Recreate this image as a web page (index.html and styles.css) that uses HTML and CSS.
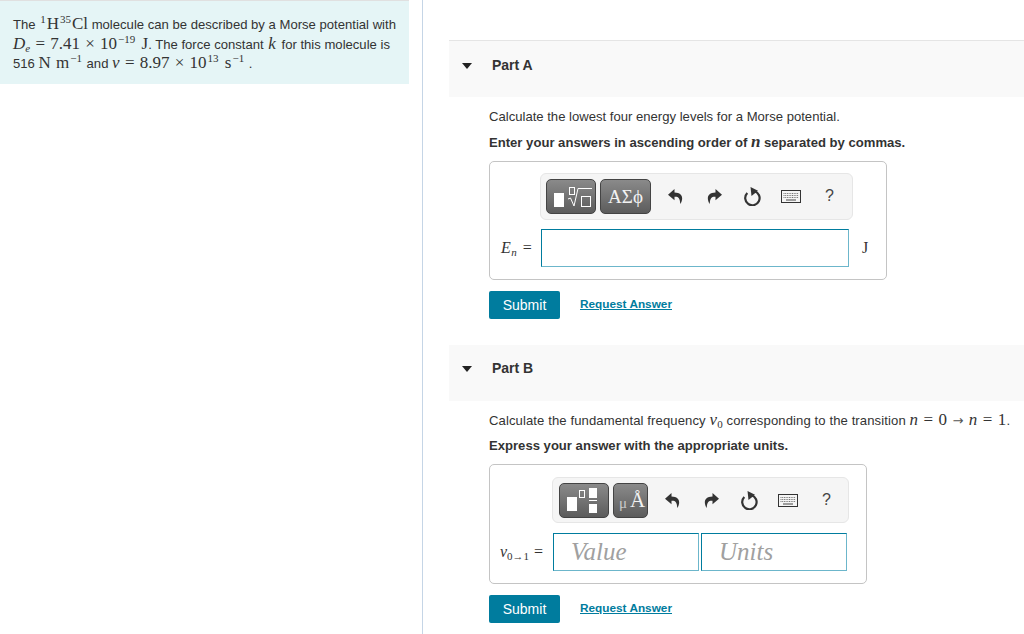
FILE: index.html
```html
<!DOCTYPE html>
<html lang="en">
<head>
    <meta charset="UTF-8">
    <title>Morse potential</title>
    <link rel="stylesheet" href="styles.css">
</head>
<body>
    <svg class="defs" width="0" height="0">
        <symbol id="undo" viewBox="0 0 15 15"><path d="M6.500 0 0 5.800 6.500 11.300V7.800C10 7.400 12 9 12.300 15 15.600 10 15 3.700 6.500 3.600Z"/></symbol>
        <symbol id="redo" viewBox="0 0 15 15"><path d="M8.500 0 15 5.800 8.500 11.300V7.800C5 7.400 3 9 2.700 15-.6 10 0 3.700 8.500 3.600Z"/></symbol>
        <symbol id="reset" viewBox="0 0 17 19"><path d="M3.300 6A7.200 7.200 0 1 0 10.500 4.200" fill="none" stroke="currentColor" stroke-width="2.200"/><path d="M6.500 0 14 3.800 7.500 9Z"/></symbol>
        <symbol id="keys" viewBox="0 0 20 13"><rect x=".5" y=".5" width="19" height="12" fill="#f5f5f5" stroke="#333"/><path d="M2.500 3.500h15M2.500 5.500h15M2.500 7.500h15" stroke="#777" stroke-dasharray="1 .7"/><path d="M5 10h10" stroke="#777" stroke-width="1.400"/></symbol>
    </svg>

    <div class="page">
        <aside class="intro-col">
            <div class="intro">
                The <span class="m"><sup>1</sup>H<sup>35</sup>Cl</span> molecule can be described by a Morse potential with<br>
                <span class="m"><i>D<sub>e</sub></i> = 7.41 × 10<sup>−19</sup> J</span>. The force constant <span class="m k"><i>k</i></span> for this molecule is<br>
                516 <span class="m">N m<sup>−1</sup></span> and <span class="m"><i>ν</i> = 8.97 × 10<sup>13</sup> s<sup>−1</sup></span> .
            </div>
        </aside>

        <main class="parts">
            <section class="part part-a">
                <header class="part-head"><span class="caret"></span><h2>Part A</h2></header>
                <div class="part-body">
                    <p>Calculate the lowest four energy levels for a Morse potential.</p>
                    <p class="strong">Enter your answers in ascending order of <span class="m"><i>n</i></span> separated by commas.</p>
                    <div class="answer answer-a">
                        <div class="toolbar">
                            <button class="tool tool-wide">
                                <span class="blk"></span>
                                <svg width="26" height="22" viewBox="0 0 26 22"><path d="M1 13 3.500 12 7 20 11 2.500H25" fill="none" stroke="#fff"/><rect x="2.500" y="1.500" width="5" height="7" fill="none" stroke="#fff"/><rect x="14.500" y="10.500" width="9" height="10" fill="none" stroke="#fff"/></svg>
                            </button>
                            <button class="tool tool-sym">ΑΣϕ</button>
                            <div class="actions">
                                <svg class="ico"><use href="#undo"/></svg>
                                <svg class="ico ico-redo"><use href="#redo"/></svg>
                                <svg class="ico ico-reset"><use href="#reset"/></svg>
                                <svg class="ico ico-keys"><use href="#keys"/></svg>
                                <span class="help">?</span>
                            </div>
                        </div>
                        <div class="entry">
                            <span class="m label label-a"><i>E<sub>n</sub></i> =</span>
                            <input class="field field-long" type="text">
                            <span class="m unit">J</span>
                        </div>
                    </div>
                    <div class="submit-row">
                        <button class="submit">Submit</button>
                        <a class="request" href="#">Request Answer</a>
                    </div>
                </div>
            </section>

            <section class="part part-b">
                <header class="part-head"><span class="caret"></span><h2>Part B</h2></header>
                <div class="part-body">
                    <p class="wide-line">Calculate the fundamental frequency <span class="m"><i>ν</i><sub>0</sub></span> corresponding to the transition <span class="m"><i>n</i> = 0 <span class="arrow">→</span> <i>n</i> = 1</span>.</p>
                    <p class="strong">Express your answer with the appropriate units.</p>
                    <div class="answer answer-b">
                        <div class="toolbar">
                            <button class="tool tool-wide">
                                <svg width="32" height="28" viewBox="0 0 32 28"><rect x="1" y="11" width="10" height="14" fill="#fff"/><rect x="13.500" y="4.500" width="5" height="7" fill="none" stroke="#fff"/><rect x="23" y="2" width="8" height="10" fill="#fff"/><path d="M23 14.500h8" stroke="#fff"/><rect x="23" y="18" width="8" height="9" fill="#fff"/></svg>
                            </button>
                            <button class="tool tool-unit"><span class="mu">μ</span>Å</button>
                            <div class="actions">
                                <svg class="ico"><use href="#undo"/></svg>
                                <svg class="ico ico-redo"><use href="#redo"/></svg>
                                <svg class="ico ico-reset"><use href="#reset"/></svg>
                                <svg class="ico ico-keys"><use href="#keys"/></svg>
                                <span class="help">?</span>
                            </div>
                        </div>
                        <div class="entry">
                            <span class="m label label-b"><i>ν</i><sub>0→1</sub> =</span>
                            <input class="field field-half" type="text" placeholder="Value">
                            <input class="field field-half" type="text" placeholder="Units">
                        </div>
                    </div>
                    <div class="submit-row">
                        <button class="submit">Submit</button>
                        <a class="request" href="#">Request Answer</a>
                    </div>
                </div>
            </section>
        </main>
    </div>
</body>
</html>
```

FILE: styles.css
```css
html, body {
    margin: 0;
    padding: 0;
    height: 634px;
    overflow: hidden;
    background: #fff;
}
body {
    font-family: "Liberation Sans", Arial, sans-serif;
    font-size: 13.100px;
    color: #333;
}
.defs {
    position: absolute;
}
.page {
    display: flex;
    height: 634px;
}
.intro-col {
    width: 423px;
    flex: none;
    box-sizing: border-box;
    border-right: 1px solid #c5d5e6;
}
.intro {
    width: 409px;
    height: 84px;
    box-sizing: border-box;
    padding: 14px 0 0 13px;
    background: #e5f5f6;
    border-top: 1px solid #e0e0e0;
    line-height: 19.500px;
    white-space: nowrap;
}
.m {
    font-family: "Liberation Serif", "DejaVu Serif", serif;
    font-size: 17px;
    line-height: 0;
    word-spacing: 1px;
}
.m sup, .m sub {
    font-size: 11px;
    line-height: 0;
}
.m sub {
    vertical-align: -3px;
}
.m sup {
    vertical-align: 6px;
    margin: 0 1px;
}
.k {
    margin: 0 2px 0 1px;
}
.arrow {
    font-family: "DejaVu Sans", sans-serif;
    font-size: 13px;
    color: #555;
}
.parts {
    flex: 1;
    padding: 40px 0 0 26px;
    min-width: 0;
}
.part-head {
    display: flex;
    height: 56px;
    box-sizing: border-box;
    padding-left: 13px;
    padding-top: 15px;
    background: #f9f9f9;
}
.part-a .part-head {
    height: 57px;
    padding-top: 16px;
    border-top: 1px solid #e5e5e5;
}
.part-b {
    margin-top: 26px;
}
.caret {
    width: 0;
    height: 0;
    margin-top: 6px;
    border-left: 5.500px solid transparent;
    border-right: 5.500px solid transparent;
    border-top: 6px solid #222;
}
h2 {
    margin: 0 0 0 20px;
    font-size: 14px;
    line-height: 17px;
    font-weight: bold;
    color: #333;
}
.part-body {
    padding: 11px 0 0 40px;
}
p {
    margin: 0;
    line-height: 17px;
    white-space: nowrap;
}
.wide-line {
    letter-spacing: .1px;
}
.strong {
    margin-top: 9px;
    font-weight: bold;
}
.part-b .strong {
    margin-top: 8px;
}
.answer {
    box-sizing: border-box;
    margin-top: 10px;
    border: 1px solid #c4c4c4;
    border-radius: 5px;
    background: #fff;
}
.answer-a {
    width: 398px;
    height: 119px;
    padding: 11px 0 0 50px;
}
.answer-b {
    width: 378px;
    height: 120px;
    padding: 12px 0 0 62px;
}
.toolbar {
    display: flex;
    align-items: center;
    gap: 4px;
    box-sizing: border-box;
    height: 47px;
    background: #f5f5f5;
    border: 1px solid #e6e6e6;
    border-radius: 6px;
}
.answer-a .toolbar {
    width: 313px;
    padding-left: 5px;
}
.answer-b .toolbar {
    width: 297px;
    height: 46px;
    padding-left: 6px;
}
.tool {
    display: flex;
    align-items: center;
    justify-content: center;
    box-sizing: border-box;
    height: 35px;
    padding: 0;
    border: 1px solid #444;
    border-radius: 5px;
    background: linear-gradient(#8a8a8a, #5c5c5c);
    color: #f2f2f2;
    font-family: "Liberation Serif", serif;
    font-size: 19px;
}
.tool-wide {
    width: 50px;
    gap: 3px;
    justify-content: flex-start;
    padding-left: 7px;
}
.answer-b .tool-wide {
    padding-left: 6px;
}
.tool-sym {
    width: 51px;
}
.tool-unit {
    width: 35px;
    font-size: 21px;
}
.mu {
    font-size: 15px;
    opacity: .7;
    margin-top: 6px;
    margin-right: 3px;
    margin-left: 3px;
}
.blk {
    width: 10px;
    height: 14px;
    background: #fff;
    margin-top: 7px;
}
.actions {
    display: flex;
    align-items: center;
    flex: 1;
    padding-left: 13px;
    gap: 22px;
    color: #333;
}
.ico {
    width: 15px;
    height: 15px;
    fill: #333;
}
.ico-redo {
    margin-left: 2px;
}
.ico-reset {
    width: 17px;
    height: 19px;
}
.ico-keys {
    width: 20px;
    height: 13px;
    margin-left: -2px;
}
.help {
    font-size: 16px;
    margin-top: -1px;
    margin-left: 2px;
    color: #444;
}
.entry {
    display: flex;
    align-items: center;
}
.answer-a .entry {
    margin: 9px 0 0 -39px;
}
.answer-b .entry {
    margin: 10px 0 0 -52px;
}
.label {
    font-size: 16px;
    line-height: 20px;
    margin-top: -1px;
    white-space: nowrap;
}
.label-a {
    width: 40px;
    letter-spacing: .5px;
}
.label-b {
    width: 53px;
}
.field {
    box-sizing: border-box;
    height: 38px;
    padding: 0 17px;
    border: 1px solid #007c9e;
    border-bottom-color: #6cb6cb;
    border-right-color: #6cb6cb;
    border-radius: 0;
    outline: none;
    background: #fff;
    font-family: "Liberation Serif", serif;
    font-size: 25px;
    font-style: italic;
}
.field::placeholder {
    color: #a0a0a0;
}
.field-long {
    width: 308px;
}
.field-half {
    width: 146px;
}
.field-half + .field-half {
    margin-left: 2px;
}
.unit {
    margin-left: 13px;
    font-size: 16px;
    line-height: 20px;
    margin-top: -1px;
}
.submit-row {
    display: flex;
    align-items: center;
    margin-top: 11px;
}
.submit {
    width: 71px;
    height: 28px;
    padding: 0;
    border: none;
    border-radius: 2px;
    background: #007c9e;
    color: #fff;
    font-family: "Liberation Sans", Arial, sans-serif;
    font-size: 14px;
}
.request {
    margin-left: 20px;
    margin-top: -2px;
    color: #007c9e;
    font-size: 11.800px;
    font-weight: bold;
}
```
